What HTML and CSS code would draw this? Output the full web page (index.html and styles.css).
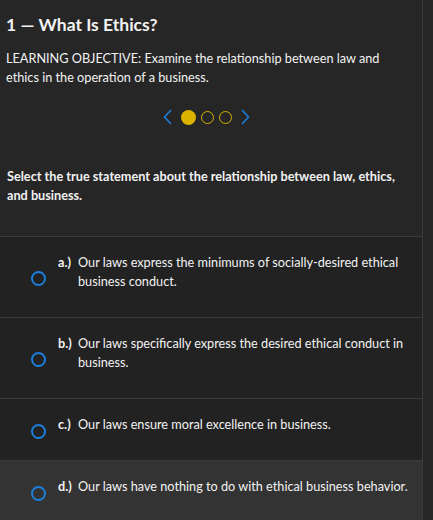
FILE: index.html
```html
<!DOCTYPE html>
<html>
<head>
<meta charset="utf-8">
<link rel="stylesheet" href="styles.css">
</head>
<body>
<div class="page">
  <div class="main">
    <div class="intro">
      <h1 class="title">1 — What Is Ethics?</h1>
      <p class="objective">LEARNING OBJECTIVE: Examine the relationship between law and ethics in the operation of a business.</p>
      <div class="pager">
        <svg class="chev" width="9" height="16" viewBox="0 0 9 16"><polyline points="8,1 1.5,8 8,15" fill="none" stroke="#1c7ed8" stroke-width="1.6"/></svg>
        <span class="dot filled"></span>
        <span class="dot"></span>
        <span class="dot"></span>
        <svg class="chev" width="9" height="16" viewBox="0 0 9 16"><polyline points="1,1 7.5,8 1,15" fill="none" stroke="#1c7ed8" stroke-width="1.6"/></svg>
      </div>
      <p class="question">Select the true statement about the relationship between law, ethics, and business.</p>
    </div>
    <div class="options">
      <div class="option">
        <span class="radio"></span>
        <div class="opt-text"><b class="label">a.)</b><span>Our laws express the minimums of socially-desired ethical business conduct.</span></div>
      </div>
      <div class="option">
        <span class="radio"></span>
        <div class="opt-text"><b class="label">b.)</b><span>Our laws specifically express the desired ethical conduct in business.</span></div>
      </div>
      <div class="option">
        <span class="radio"></span>
        <div class="opt-text"><b class="label">c.)</b><span>Our laws ensure moral excellence in business.</span></div>
      </div>
      <div class="option hover">
        <span class="radio"></span>
        <div class="opt-text"><b class="label">d.)</b><span>Our laws have nothing to do with ethical business behavior.</span></div>
      </div>
    </div>
  </div>
  <div class="side"></div>
</div>
</body>
</html>
```
FILE: styles.css
```css
html, body {
  margin: 0;
  padding: 0;
  background: #262626;
  height: 100%;
}
body {
  font-family: "Lato", "Liberation Sans", sans-serif;
  color: #f2f2f2;
  overflow: hidden;
}
.page {
  display: flex;
  min-height: 520px;
}
.main {
  width: 422px;
  border-right: 1px solid #3a3a3a;
  background: #262626;
}
.side {
  flex: 1;
  background: #262626;
}
.intro {
  padding: 13px 6px 31px 6px;
}
.title {
  margin: 0;
  font-size: 17.5px;
  line-height: 24px;
  font-weight: 700;
}
.objective {
  margin: 12px 0 0 0;
  padding-right: 24px;
  font-size: 12.7px;
  line-height: 18.5px;
}
.pager {
  margin-top: 21px;
  display: flex;
  justify-content: center;
  align-items: center;
  gap: 5px;
  height: 20px;
  padding-right: 10px;
}
.chev { display: block; margin: 0 4px; }
.dot {
  width: 13px;
  height: 13px;
  box-sizing: border-box;
  border: 1.5px solid #d9b300;
  border-radius: 50%;
}
.dot.filled {
  width: 15px;
  height: 15px;
  border: none;
  background: #dcb400;
}
.question {
  margin: 40px 0 0 1px;
  font-size: 12.7px;
  line-height: 19px;
  font-weight: 700;
}
.options {
  border-top: 1px solid #3a3a3a;
}
.option {
  display: flex;
  align-items: center;
  background: #222222;
  border-bottom: 1px solid #3a3a3a;
  padding: 0 10px 0 31px;
}
.option.hover {
  background: #333333;
  border-bottom: none;
}
.radio {
  flex: none;
  width: 11px;
  height: 11px;
  border: 2px solid #1b7fdc;
  border-radius: 50%;
  margin-top: 3px;
}
.opt-text {
  display: flex;
  margin-left: 12px;
  padding: 16px 0 26px 0;
  font-size: 12.7px;
  line-height: 19px;
}
.label {
  flex: none;
  width: 20px;
}
```
